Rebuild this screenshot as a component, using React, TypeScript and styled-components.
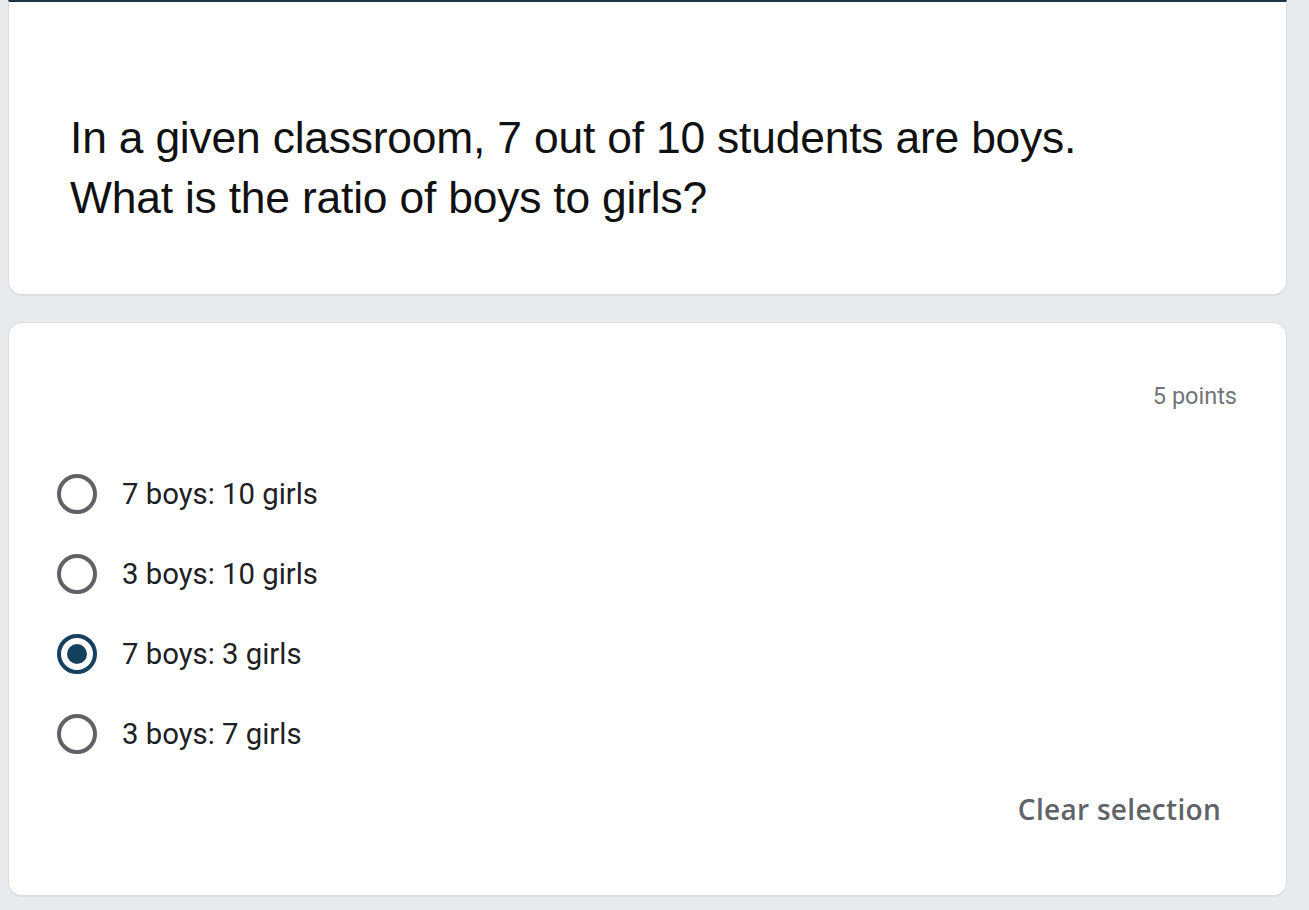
import React, { useState } from "react";
import styled, { createGlobalStyle } from "styled-components";

const Global = createGlobalStyle`
  html, body { margin: 0; padding: 0; background: #e8ebee; }
  body { font-family: Roboto, "Noto Sans", sans-serif; }
  * { box-sizing: border-box; }
`;

const Page = styled.div`
  display: flex;
  flex-direction: column;
  gap: 26px;
  padding: 0 22px 14px 8px;
  min-height: 910px;
`;

const Card = styled.div<{ $top?: boolean }>`
  background: #ffffff;
  border: 1px solid #dadce0;
  border-bottom-width: 2px;
  border-radius: ${(p) => (p.$top ? "0 0 14px 14px" : "14px")};
  ${(p) => (p.$top ? "border-top: 2px solid #1c3445;" : "")}
`;

const QuestionCard = styled(Card)`
  height: 296px;
  padding: 106px 40px 0 61px;
`;

const QuestionText = styled.div`
  font-family: "Liberation Sans", Arial, sans-serif;
  font-size: 44.4px;
  line-height: 60px;
  color: #111;
  letter-spacing: -0.2px;
`;

const AnswerCard = styled(Card)`
  height: 575px;
  padding: 58px 49px 0 48px;
  display: flex;
  flex-direction: column;
`;

const Points = styled.div`
  align-self: flex-end;
  font-size: 23.5px;
  line-height: 30px;
  color: #70757a;
`;

const Options = styled.div`
  margin-top: 43px;
  display: flex;
  flex-direction: column;
`;

const Option = styled.label`
  display: flex;
  align-items: center;
  height: 80px;
  gap: 25px;
  cursor: pointer;
  font-size: 29.3px;
  color: #202124;
`;

const Radio = styled.span<{ $checked: boolean }>`
  width: 40px;
  height: 40px;
  border-radius: 50%;
  border: 4px solid ${(p) => (p.$checked ? "#15405e" : "#5f6368")};
  display: flex;
  align-items: center;
  justify-content: center;
  flex: none;
  &::after {
    content: "";
    width: 20px;
    height: 20px;
    border-radius: 50%;
    background: #15405e;
    display: ${(p) => (p.$checked ? "block" : "none")};
  }
`;

const ClearRow = styled.div`
  display: flex;
  justify-content: flex-end;
  margin-top: 10px;
  padding-right: 16px;
`;

const ClearButton = styled.button`
  background: none;
  border: none;
  padding: 0;
  font-family: "Open Sans", Roboto, sans-serif;
  font-weight: 600;
  font-size: 28px;
  letter-spacing: 0.3px;
  line-height: 50px;
  color: #5f6368;
  cursor: pointer;
`;

const options = ["7 boys: 10 girls", "3 boys: 10 girls", "7 boys: 3 girls", "3 boys: 7 girls"];

export default function App() {
  const [sel, setSel] = useState<number | null>(2);
  return (
    <>
      <Global />
      <Page>
        <QuestionCard $top>
          <QuestionText>
            In a given classroom, 7 out of 10 students are boys.
            <br />
            What is the ratio of boys to girls?
          </QuestionText>
        </QuestionCard>
        <AnswerCard>
          <Points>5 points</Points>
          <Options>
            {options.map((o, i) => (
              <Option key={o} onClick={() => setSel(i)}>
                <Radio $checked={sel === i} />
                <span>{o}</span>
              </Option>
            ))}
          </Options>
          <ClearRow>
            <ClearButton onClick={() => setSel(null)}>Clear selection</ClearButton>
          </ClearRow>
        </AnswerCard>
      </Page>
    </>
  );
}
